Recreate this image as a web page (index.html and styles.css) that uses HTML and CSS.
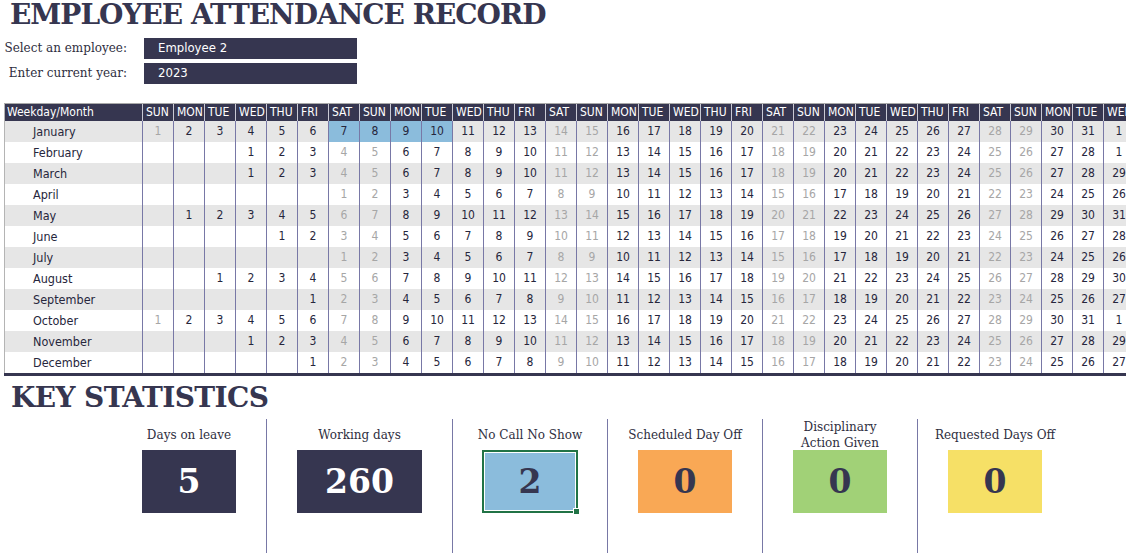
FILE: index.html
```html
<!DOCTYPE html>
<html lang="en">
<head>
<meta charset="utf-8">
<title>Employee Attendance Record</title>
<link rel="stylesheet" href="styles.css">
</head>
<body>
<h1 class="title">EMPLOYEE ATTENDANCE RECORD</h1>
<div class="form">
  <label class="lbl">Select an employee:</label><div class="field">Employee 2</div>
  <label class="lbl">Enter current year:</label><div class="field">2023</div>
</div>
<div class="cal">
  <div class="row head"><span class="m">Weekday/Month</span><i>SUN</i><i>MON</i><i>TUE</i><i>WED</i><i>THU</i><i>FRI</i><i>SAT</i><i>SUN</i><i>MON</i><i>TUE</i><i>WED</i><i>THU</i><i>FRI</i><i>SAT</i><i>SUN</i><i>MON</i><i>TUE</i><i>WED</i><i>THU</i><i>FRI</i><i>SAT</i><i>SUN</i><i>MON</i><i>TUE</i><i>WED</i><i>THU</i><i>FRI</i><i>SAT</i><i>SUN</i><i>MON</i><i>TUE</i><i>WED</i></div>
  <div class="row alt"><span class="m">January</span><i>1</i><i>2</i><i>3</i><i>4</i><i>5</i><i>6</i><i class="hl">7</i><i class="hl">8</i><i class="hl">9</i><i class="hl">10</i><i>11</i><i>12</i><i>13</i><i>14</i><i>15</i><i>16</i><i>17</i><i>18</i><i>19</i><i>20</i><i>21</i><i>22</i><i>23</i><i>24</i><i>25</i><i>26</i><i>27</i><i>28</i><i>29</i><i>30</i><i>31</i><i>1</i></div>
  <div class="row"><span class="m">February</span><i></i><i></i><i></i><i>1</i><i>2</i><i>3</i><i>4</i><i>5</i><i>6</i><i>7</i><i>8</i><i>9</i><i>10</i><i>11</i><i>12</i><i>13</i><i>14</i><i>15</i><i>16</i><i>17</i><i>18</i><i>19</i><i>20</i><i>21</i><i>22</i><i>23</i><i>24</i><i>25</i><i>26</i><i>27</i><i>28</i><i>1</i></div>
  <div class="row alt"><span class="m">March</span><i></i><i></i><i></i><i>1</i><i>2</i><i>3</i><i>4</i><i>5</i><i>6</i><i>7</i><i>8</i><i>9</i><i>10</i><i>11</i><i>12</i><i>13</i><i>14</i><i>15</i><i>16</i><i>17</i><i>18</i><i>19</i><i>20</i><i>21</i><i>22</i><i>23</i><i>24</i><i>25</i><i>26</i><i>27</i><i>28</i><i>29</i></div>
  <div class="row"><span class="m">April</span><i></i><i></i><i></i><i></i><i></i><i></i><i>1</i><i>2</i><i>3</i><i>4</i><i>5</i><i>6</i><i>7</i><i>8</i><i>9</i><i>10</i><i>11</i><i>12</i><i>13</i><i>14</i><i>15</i><i>16</i><i>17</i><i>18</i><i>19</i><i>20</i><i>21</i><i>22</i><i>23</i><i>24</i><i>25</i><i>26</i></div>
  <div class="row alt"><span class="m">May</span><i></i><i>1</i><i>2</i><i>3</i><i>4</i><i>5</i><i>6</i><i>7</i><i>8</i><i>9</i><i>10</i><i>11</i><i>12</i><i>13</i><i>14</i><i>15</i><i>16</i><i>17</i><i>18</i><i>19</i><i>20</i><i>21</i><i>22</i><i>23</i><i>24</i><i>25</i><i>26</i><i>27</i><i>28</i><i>29</i><i>30</i><i>31</i></div>
  <div class="row"><span class="m">June</span><i></i><i></i><i></i><i></i><i>1</i><i>2</i><i>3</i><i>4</i><i>5</i><i>6</i><i>7</i><i>8</i><i>9</i><i>10</i><i>11</i><i>12</i><i>13</i><i>14</i><i>15</i><i>16</i><i>17</i><i>18</i><i>19</i><i>20</i><i>21</i><i>22</i><i>23</i><i>24</i><i>25</i><i>26</i><i>27</i><i>28</i></div>
  <div class="row alt"><span class="m">July</span><i></i><i></i><i></i><i></i><i></i><i></i><i>1</i><i>2</i><i>3</i><i>4</i><i>5</i><i>6</i><i>7</i><i>8</i><i>9</i><i>10</i><i>11</i><i>12</i><i>13</i><i>14</i><i>15</i><i>16</i><i>17</i><i>18</i><i>19</i><i>20</i><i>21</i><i>22</i><i>23</i><i>24</i><i>25</i><i>26</i></div>
  <div class="row"><span class="m">August</span><i></i><i></i><i>1</i><i>2</i><i>3</i><i>4</i><i>5</i><i>6</i><i>7</i><i>8</i><i>9</i><i>10</i><i>11</i><i>12</i><i>13</i><i>14</i><i>15</i><i>16</i><i>17</i><i>18</i><i>19</i><i>20</i><i>21</i><i>22</i><i>23</i><i>24</i><i>25</i><i>26</i><i>27</i><i>28</i><i>29</i><i>30</i></div>
  <div class="row alt"><span class="m">September</span><i></i><i></i><i></i><i></i><i></i><i>1</i><i>2</i><i>3</i><i>4</i><i>5</i><i>6</i><i>7</i><i>8</i><i>9</i><i>10</i><i>11</i><i>12</i><i>13</i><i>14</i><i>15</i><i>16</i><i>17</i><i>18</i><i>19</i><i>20</i><i>21</i><i>22</i><i>23</i><i>24</i><i>25</i><i>26</i><i>27</i></div>
  <div class="row"><span class="m">October</span><i>1</i><i>2</i><i>3</i><i>4</i><i>5</i><i>6</i><i>7</i><i>8</i><i>9</i><i>10</i><i>11</i><i>12</i><i>13</i><i>14</i><i>15</i><i>16</i><i>17</i><i>18</i><i>19</i><i>20</i><i>21</i><i>22</i><i>23</i><i>24</i><i>25</i><i>26</i><i>27</i><i>28</i><i>29</i><i>30</i><i>31</i><i>1</i></div>
  <div class="row alt"><span class="m">November</span><i></i><i></i><i></i><i>1</i><i>2</i><i>3</i><i>4</i><i>5</i><i>6</i><i>7</i><i>8</i><i>9</i><i>10</i><i>11</i><i>12</i><i>13</i><i>14</i><i>15</i><i>16</i><i>17</i><i>18</i><i>19</i><i>20</i><i>21</i><i>22</i><i>23</i><i>24</i><i>25</i><i>26</i><i>27</i><i>28</i><i>29</i></div>
  <div class="row"><span class="m">December</span><i></i><i></i><i></i><i></i><i></i><i>1</i><i>2</i><i>3</i><i>4</i><i>5</i><i>6</i><i>7</i><i>8</i><i>9</i><i>10</i><i>11</i><i>12</i><i>13</i><i>14</i><i>15</i><i>16</i><i>17</i><i>18</i><i>19</i><i>20</i><i>21</i><i>22</i><i>23</i><i>24</i><i>25</i><i>26</i><i>27</i></div>
</div>
<h2 class="stats-title">KEY STATISTICS</h2>
<div class="stats">
  <div class="stat"><div class="lab">Days on leave</div><div class="val dark">5</div></div>
  <div class="stat"><div class="lab">Working days</div><div class="val dark wide">260</div></div>
  <div class="stat"><div class="lab">No Call No Show</div><div class="val blue sel">2</div></div>
  <div class="stat"><div class="lab">Scheduled Day Off</div><div class="val orange">0</div></div>
  <div class="stat"><div class="lab">Disciplinary<br>Action Given</div><div class="val green">0</div></div>
  <div class="stat"><div class="lab">Requested Days Off</div><div class="val yellow">0</div></div>
</div>
</body>
</html>
```
FILE: styles.css
```css
html, body {
  margin: 0;
  padding: 0;
}
body {
  width: 1126px;
  height: 553px;
  overflow: hidden;
  background: #ffffff;
  color: #363650;
  font-family: "DejaVu Sans Condensed", "DejaVu Sans", sans-serif;
  font-stretch: condensed;
}

.title {
  margin: 0;
  padding-left: 10px;
  height: 32px;
  font: bold 28px/30px "DejaVu Serif", serif;
  letter-spacing: -1px;
  color: #363650;
  white-space: nowrap;
}

.form {
  display: grid;
  grid-template-columns: 136px 213px;
  column-gap: 8px;
  row-gap: 4px;
  margin-top: 6px;
}
.lbl {
  font: 12px/21px "DejaVu Serif", serif;
  color: #2e2e3e;
  text-align: right;
  padding-right: 9px;
  white-space: nowrap;
}
.field {
  height: 21px;
  background: #363650;
  color: #ffffff;
  font-size: 13px;
  line-height: 19px;
  padding-left: 14px;
}

.cal {
  margin: 19px 0 0 4px;
  border-top: 1px solid #a9a9a9;
  border-bottom: 3px solid #363650;
  overflow: hidden;
}
.row {
  display: grid;
  grid-template-columns: 138px repeat(32, 31px);
  height: 21px;
  font-size: 12px;
  line-height: 21px;
  color: #26263c;
}
.row > * {
  box-sizing: border-box;
  border-left: 1px solid #7878a6;
  font-style: normal;
  text-align: center;
  white-space: nowrap;
  overflow: hidden;
}
.row > .m {
  border-left-color: #b4b4b4;
  text-align: left;
  padding-left: 28px;
  font-size: 12.5px;
}
.row.alt {
  background: #e6e6e6;
}
.row:not(.head) > :nth-child(7n+2),
.row:not(.head) > :nth-child(7n+8) {
  color: #a6a6a6;
}
.row > .hl {
  background: #8bbcdc;
  color: #26263c !important;
}

.row.head {
  height: 17px;
  line-height: 17px;
  background: #363650;
  color: #ffffff;
}
.row.head > * {
  border-left-color: #c9c9d4;
  text-align: left;
  padding-left: 3px;
}
.row.head > .m {
  border-left-color: #b4b4b4;
  padding-left: 2px;
  font-size: 12px;
}

.stats-title {
  margin: 0;
  padding-left: 11px;
  height: 43px;
  font: bold 28px/43px "DejaVu Serif", serif;
  letter-spacing: -0.6px;
  color: #363650;
  white-space: nowrap;
}

.stats {
  display: grid;
  grid-template-columns: 154px 186px 155px 155px 155px 155px;
  margin-left: 112px;
  height: 134px;
}
.stat {
  display: flex;
  flex-direction: column;
  align-items: center;
}
.stat + .stat {
  border-left: 1px solid #7878a6;
}
.lab {
  height: 31px;
  display: flex;
  align-items: center;
  text-align: center;
  font: 12px/16px "DejaVu Serif", serif;
  color: #2e2e3e;
}
.val {
  position: relative;
  box-sizing: border-box;
  width: 94px;
  height: 63px;
  display: flex;
  align-items: center;
  justify-content: center;
  font: bold 33px/1 "DejaVu Serif", serif;
  color: #363650;
}
.val.wide {
  width: 125px;
}
.val.dark {
  background: #363650;
  color: #ffffff;
}
.val.blue {
  background: #8bbcdc;
}
.val.orange {
  background: #f9a855;
}
.val.green {
  background: #a1d177;
}
.val.yellow {
  background: #f6e066;
}
.val.sel {
  width: 96px;
  border: 2px solid #217346;
  box-shadow: inset 0 0 0 1px #ffffff;
}
.val.sel::after {
  content: "";
  position: absolute;
  right: -4px;
  bottom: -4px;
  width: 5px;
  height: 5px;
  background: #217346;
  border: 1px solid #ffffff;
}
```
